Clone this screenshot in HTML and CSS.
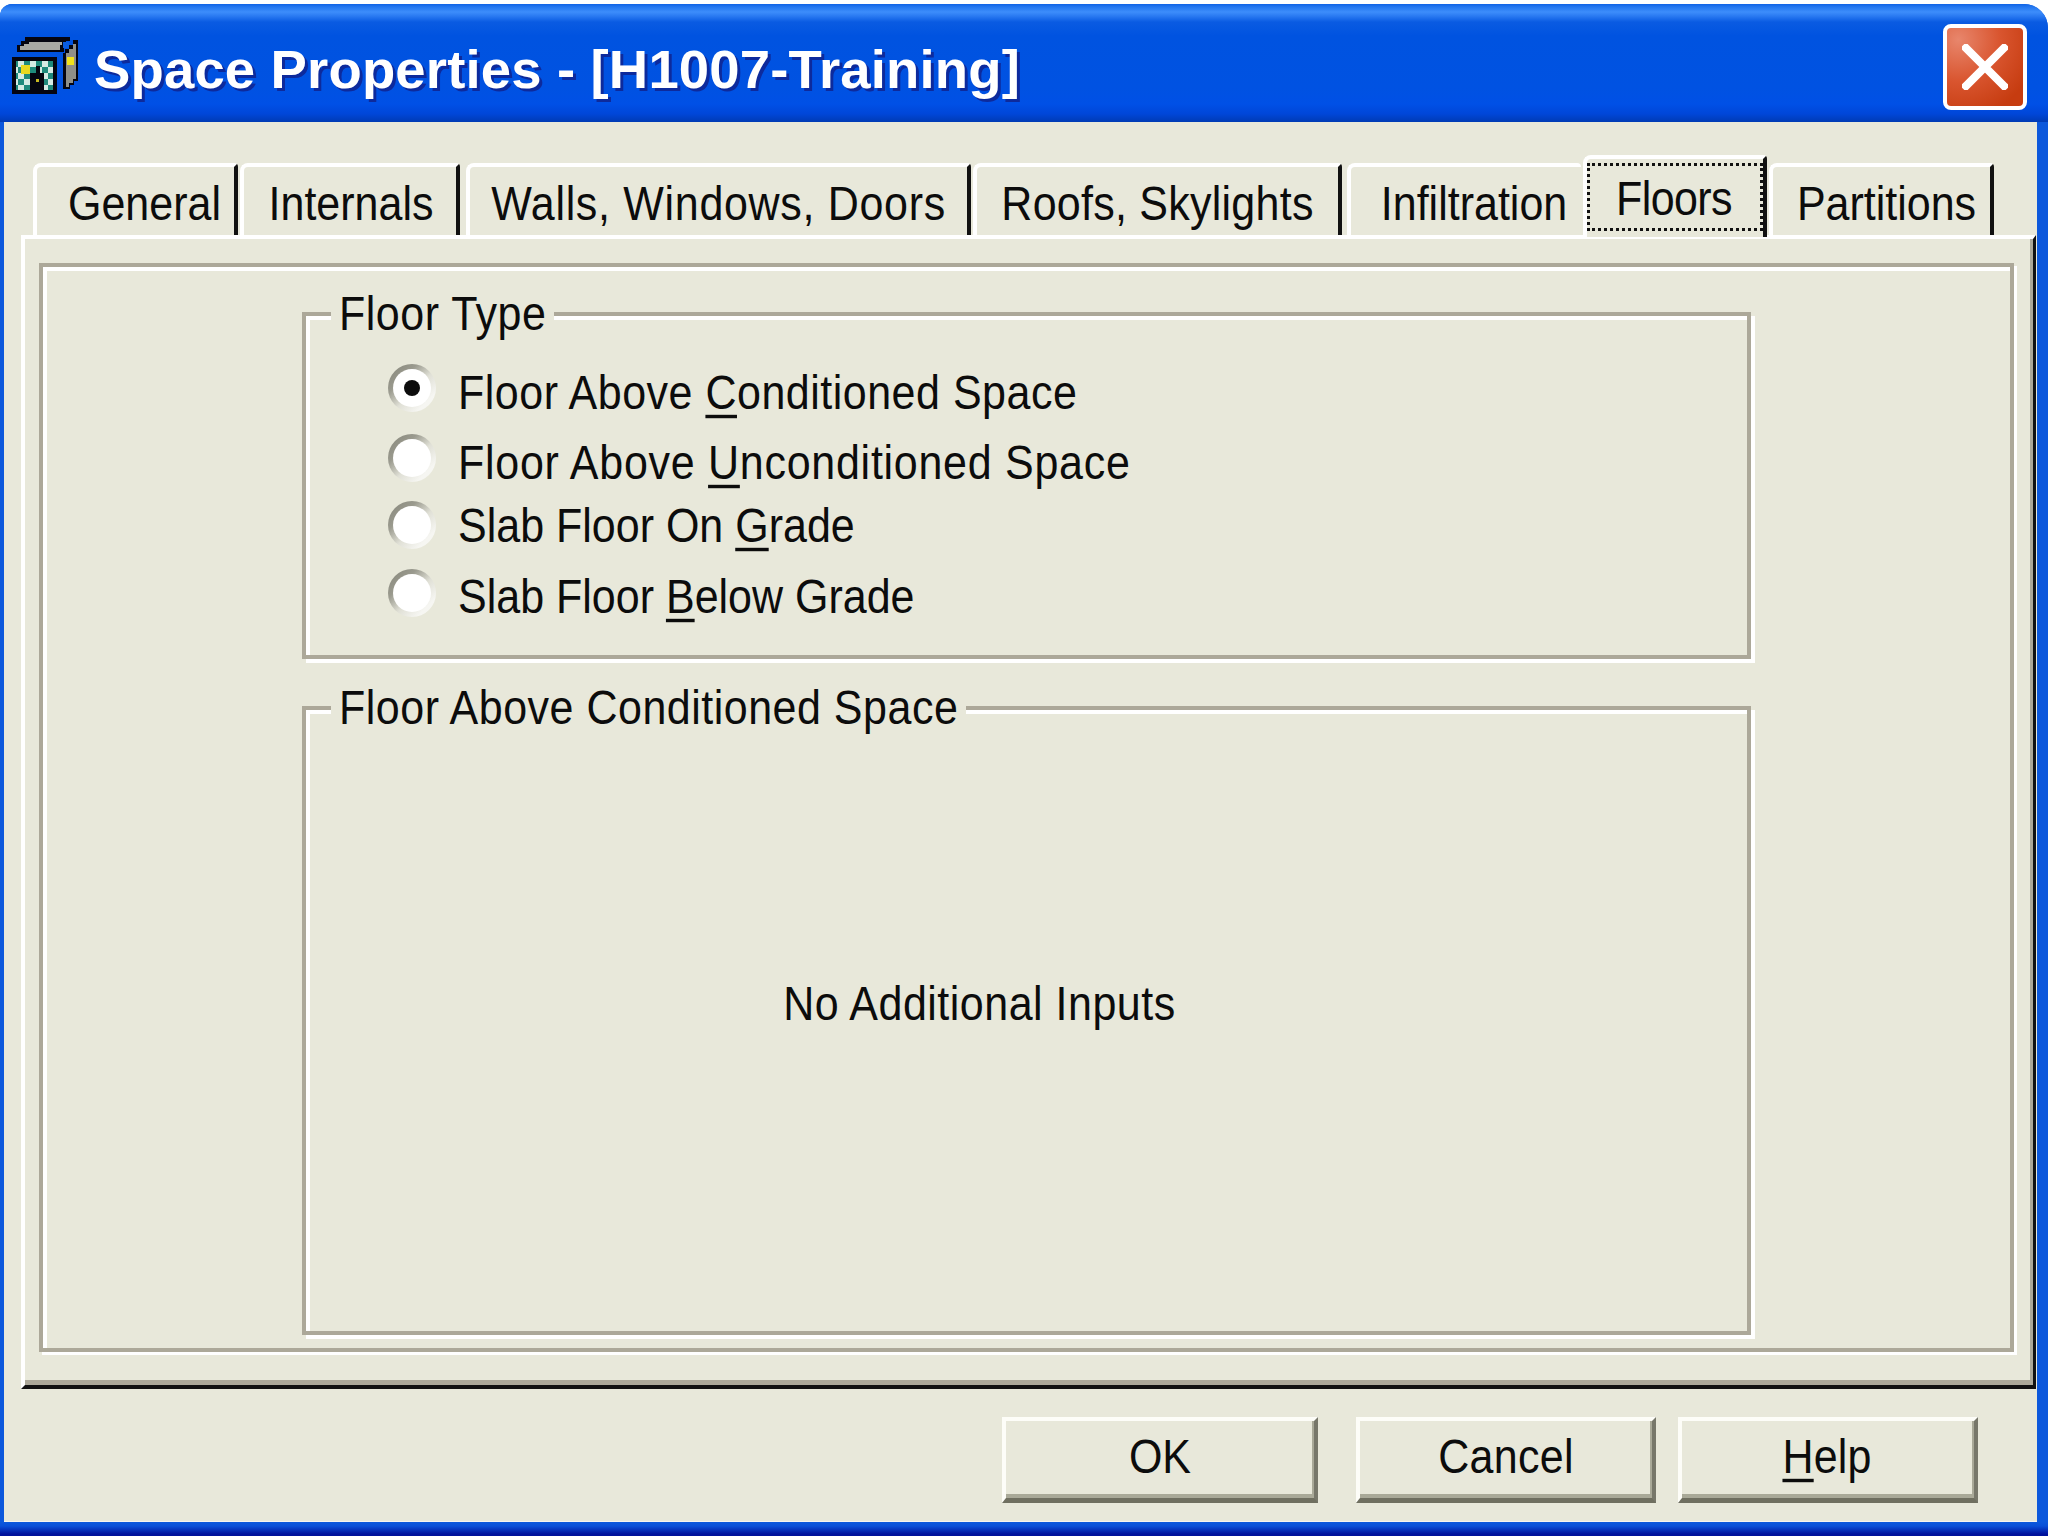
FILE: index.html
```html
<!DOCTYPE html>
<html lang="en">
<head>
<meta charset="utf-8">
<title>Space Properties - [H1007-Training]</title>
<link rel="stylesheet" href="styles.css">
</head>
<body>
<div class="window">
  <header class="titlebar">
    <svg class="app-icon" viewBox="0 0 66 57" shape-rendering="crispEdges" aria-hidden="true">
      <defs>
        <pattern id="check" width="12" height="12" patternUnits="userSpaceOnUse">
          <rect width="12" height="12" fill="#d5ebe4"/>
          <rect width="6" height="6" fill="#1f8a7c"/>
          <rect x="6" y="6" width="6" height="6" fill="#1f8a7c"/>
        </pattern>
      </defs>
      <path d="M13 0H58V4H54V8H52V15H5V8H9V4H13Z" fill="#050510"/>
      <path d="M17 5H50V8H48V13H8V9H12V7H17Z" fill="#a9a9a4"/>
      <path d="M51 16h2V12h4V8h4V3h5V44h-4v4h-4v4h-7z" fill="#050510"/>
      <path d="M54 16h3V12h4V7h3V42h-3v4h-4v4h-3z" fill="#8f8f88"/>
      <rect x="55" y="20" width="7" height="8" fill="#f2e21a"/>
      <rect x="51" y="5" width="6" height="6" fill="#0a5ce0"/>
      <rect x="0" y="20" width="45" height="37" fill="#050510"/>
      <rect x="4" y="24" width="37" height="29" fill="url(#check)"/>
      <rect x="9" y="28" width="9" height="9" fill="#e8d820"/>
      <path d="M18 36h6v-7h4v7h4v17H18z" fill="#050510"/>
      <rect x="24" y="42" width="3" height="3" fill="#c8b820"/>
    </svg>
    <h1 class="title">Space Properties - [H1007-Training]</h1>
    <div class="close">
      <svg class="close-x" viewBox="0 0 46 46" aria-hidden="true">
        <path d="M4 4L42 42M42 4L4 42" stroke="#fff" stroke-width="8" stroke-linecap="square" fill="none"/>
      </svg>
    </div>
  </header>
  <div class="client">
    <nav class="tabs">
      <div class="tab tab-general"><span class="t">General</span></div>
      <div class="tab tab-internals"><span class="t">Internals</span></div>
      <div class="tab tab-walls"><span class="t">Walls, Windows, Doors</span></div>
      <div class="tab tab-roofs"><span class="t">Roofs, Skylights</span></div>
      <div class="tab tab-infiltration"><span class="t">Infiltration</span></div>
      <div class="tab tab-floors"><span class="t">Floors</span></div>
      <div class="tab tab-partitions"><span class="t">Partitions</span></div>
    </nav>
    <main class="panel">
      <div class="frame">
        <section class="group group-type">
          <div class="legend"><span class="t wide">Floor Type</span></div>
          <div class="options">
            <div class="option option-1"><span class="radio radio-on"></span><span class="t wide">Floor Above <u>C</u>onditioned Space</span></div>
            <div class="option option-2"><span class="radio"></span><span class="t wider">Floor Above <u>U</u>nconditioned Space</span></div>
            <div class="option option-3"><span class="radio"></span><span class="t">Slab Floor On <u>G</u>rade</span></div>
            <div class="option option-4"><span class="radio"></span><span class="t">Slab Floor <u>B</u>elow Grade</span></div>
          </div>
        </section>
        <section class="group group-detail">
          <div class="legend"><span class="t wide">Floor Above Conditioned Space</span></div>
          <div class="note"><span class="t wide">No Additional Inputs</span></div>
        </section>
      </div>
    </main>
    <footer class="actions">
      <div class="btn btn-ok"><span class="t">OK</span></div>
      <div class="btn btn-cancel"><span class="t">Cancel</span></div>
      <div class="btn btn-help"><span class="t"><u>H</u>elp</span></div>
    </footer>
  </div>
</div>
</body>
</html>
```
FILE: styles.css
```css
* { box-sizing: border-box; }
html, body { margin: 0; padding: 0; background: #fff; }
body { width: 2048px; height: 1536px; overflow: hidden; }

.window {
  margin-top: 4px;
  height: 1532px;
  display: flex;
  flex-direction: column;
  background: linear-gradient(to bottom, #0c58dc 0, #0c58dc 1518px, #0a50d8 1522px, #00129c 1530px);
  border-radius: 12px 24px 0 0;
  font-family: "Liberation Sans", Arial, sans-serif;
  font-size: 43px;
  line-height: 50px;
  color: #0c0c0c;
}

.titlebar {
  flex: 0 0 118px;
  display: flex;
  align-items: center;
  padding: 8px 21px 0 12px;
  border-radius: 12px 24px 0 0;
  background: linear-gradient(to bottom,
    #0f63e6 0, #2478f0 3px, #3d8dfb 8px, #2a7af2 12px, #0a5be2 18px,
    #0053e0 32px, #0052e2 84px, #0050e6 100px, #0046d8 110px, #003ab4 118px);
}

.app-icon { width: 66px; height: 57px; flex: none; margin-top: -4px; }

.title {
  margin: 6px 0 0 16px;
  font-size: 54.5px;
  line-height: 60px;
  letter-spacing: .15px;
  font-weight: 700;
  color: #fff;
  text-shadow: 3px 3px 0 #0d2a9c;
  white-space: nowrap;
}

.close {
  margin-left: auto;
  width: 84px;
  height: 86px;
  display: flex;
  align-items: center;
  justify-content: center;
  border: 4px solid #fff;
  border-radius: 8px;
  background: radial-gradient(circle at 15% 15%, #e8866c 0, #d9552f 45%, #c63c10 85%);
}
.close-x { width: 46px; height: 46px; }

.client {
  flex: 1;
  margin: 0 11px 14px 4px;
  display: flex;
  flex-direction: column;
  background: #e8e8da;
  border-bottom: 1px solid #f4f4f0;
}

.t { display: inline-block; transform: scaleY(1.14); white-space: nowrap; }
.wide { letter-spacing: .5px; }
.wider { letter-spacing: .72px; }
u { text-decoration-thickness: 3px; text-underline-offset: 5px; }

.tabs {
  height: 80px;
  margin: 33px 0 0 29px;
  display: flex;
  align-items: flex-end;
}
.tab {
  position: relative;
  height: 72px;
  display: flex;
  align-items: center;
  justify-content: center;
  padding: 4px 0 0 18px;
  border-top: 4px solid #fff;
  border-left: 4px solid #fff;
  border-right: 4px solid #111;
  border-radius: 8px 4px 0 0;
}
.tab-general { width: 205px; }
.tab-internals { width: 220px; margin-left: 2px; padding-left: 2px; }
.tab-walls { width: 505px; margin-left: 6px; padding: 4px 0 0 0; letter-spacing: .68px; }
.tab-roofs { width: 369px; margin-left: 2px; padding: 4px 0 0 0; letter-spacing: .25px; }
.tab-infiltration { width: 234px; margin-left: 5px; padding-left: 16px; border-right: 0; }
.tab-floors {
  width: 184px;
  height: 82px;
  margin: 0 0 -2px 2px;
  padding: 0 2px 0 0;
  z-index: 1;
  letter-spacing: -.6px;
  background: #e8e8da;
}
.tab-floors::after {
  content: "";
  position: absolute;
  left: 0;
  top: 4px;
  width: 170px;
  height: 62px;
  border: 3px dotted #111;
}
.tab-partitions { width: 225px; margin-left: 2px; padding-left: 10px; }

.panel {
  width: 2015px;
  height: 1154px;
  margin-left: 17px;
  padding: 24px 0 0 14px;
  border-top: 4px solid #fff;
  border-left: 4px solid #fff;
  border-right: 3px solid #111;
  border-bottom: 4px solid #111;
  box-shadow: inset -3px -5px 0 #aca899;
}

.frame {
  width: 1975px;
  height: 1089px;
  padding: 45px 0 0 259px;
  border: 4px solid #aca899;
  box-shadow: inset 4px 4px 0 #fff, 3px 3px 0 #fff;
}

.group {
  width: 1449px;
  display: flex;
  flex-direction: column;
  border: 4px solid #aca899;
  box-shadow: inset 4px 4px 0 #fff, 4px 4px 0 #fff;
}
.group-type { height: 347px; }
.group-detail { height: 629px; margin-top: 47px; }

.legend {
  align-self: flex-start;
  margin: -28px 0 0 25px;
  padding: 0 8px;
  background: #e8e8da;
}

.options { margin: 16px 0 0 82px; }
.option {
  height: 68px;
  display: flex;
  align-items: center;
  gap: 22px;
}
.option-1 { margin-bottom: 2px; }
.option-1 .t, .option-2 .t { margin-top: 8px; }
.option-2 { margin-bottom: -1px; }
.option-4 .t { margin-top: 6px; }

.radio {
  position: relative;
  flex: none;
  width: 48px;
  height: 48px;
  border-radius: 50%;
  background: linear-gradient(135deg, #85857a 0, #9a9a8e 30%, #e0e0d6 55%, #f6f6f2 80%);
}
.radio::before {
  content: "";
  position: absolute;
  inset: 5px;
  border-radius: 50%;
  background: #fff;
}
.radio-on::after {
  content: "";
  position: absolute;
  left: 16px;
  top: 16px;
  width: 16px;
  height: 16px;
  border-radius: 50%;
  background: #0c0c0c;
}

.note {
  flex: 1;
  display: flex;
  align-items: center;
  justify-content: center;
  padding: 0 94px 58px 0;
}

.actions {
  margin-top: 28px;
  padding-right: 59px;
  display: flex;
  justify-content: flex-end;
}
.btn {
  height: 86px;
  display: flex;
  align-items: center;
  justify-content: center;
  padding-bottom: 8px;
  border-top: 4px solid #fdfdf8;
  border-left: 4px solid #fdfdf8;
  border-right: 4px solid #77776a;
  border-bottom: 5px solid #6f6f60;
  box-shadow: inset -2px -4px 0 #a9a998;
}
.btn-ok { width: 316px; }
.btn-cancel { width: 300px; margin-left: 38px; letter-spacing: .3px; }
.btn-help { width: 300px; margin-left: 22px; padding-right: 2px; letter-spacing: .15px; }
```
